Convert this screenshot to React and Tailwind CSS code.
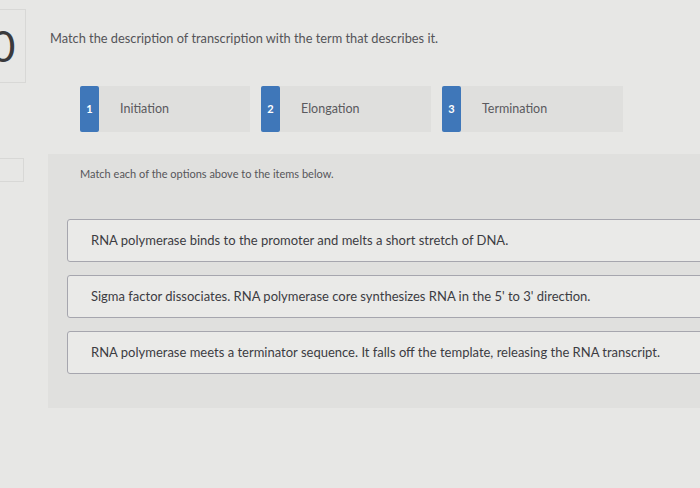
const options = [
    { n: 1, label: "Initiation", w: "w-[170px]" },
    { n: 2, label: "Elongation", w: "w-[170px]" },
    { n: 3, label: "Termination", w: "w-[181px]" },
];

const items = [
    "RNA polymerase binds to the promoter and melts a short stretch of DNA.",
    "Sigma factor dissociates. RNA polymerase core synthesizes RNA in the 5' to 3' direction.",
    "RNA polymerase meets a terminator sequence. It falls off the template, releasing the RNA transcript.",
];

const App = () => {
    return (
        <div
            className="w-[700px] h-[488px] bg-[#e7e7e5] flex overflow-hidden text-[#505054]"
            style={{ fontFamily: "Lato, 'Open Sans', sans-serif" }}
        >
            {/* side question list */}
            <div className="w-[28px] shrink-0 flex flex-col">
                <div className="mt-[9px] h-[74px] w-[26px] border border-l-0 border-[#d8d8d6] flex items-center justify-start overflow-hidden">
                    <span className="text-[42px] leading-none text-[#3a3a3c] -ml-[9px]">0</span>
                </div>
                <div className="mt-[75px] h-[24px] w-[24px] border border-l-0 border-[#d8d8d6]" />
            </div>

            <div className="flex-1 flex flex-col pl-[22px]">
                <p className="mt-[29px] text-[12.8px] leading-[18px] text-[#545458]">
                    Match the description of transcription with the term that describes it.
                </p>

                <div className="mt-[39px] ml-[30px] flex gap-[11px]">
                    {options.map((o) => (
                        <div key={o.n} className={`${o.w} h-[46px] flex`}>
                            <div className="w-[19px] h-full bg-[#3f77b9] rounded-[2px] flex items-center justify-center text-white text-[11px] font-bold">
                                {o.n}
                            </div>
                            <div className="flex-1 bg-[#dfdfdd] flex items-center pl-[21px] text-[12.5px] text-[#5a5a5e]">
                                {o.label}
                            </div>
                        </div>
                    ))}
                </div>

                <div className="mt-[22px] -ml-[2px] flex-1 mb-[80px] bg-[#e0e0de] pt-[13px] pl-[32px]">
                    <p className="text-[11px] leading-[14px] text-[#56565a]">
                        Match each of the options above to the items below.
                    </p>
                    <div className="mt-[38px] -ml-[13px] flex flex-col gap-[13px]">
                        {items.map((t) => (
                            <div
                                key={t}
                                className="w-[640px] h-[43px] bg-[#eaeae8] border border-[#a6a6ae] rounded-[3px] flex items-center pl-[23px] text-[13px] text-[#3c3c42]"
                            >
                                {t}
                            </div>
                        ))}
                    </div>
                </div>
            </div>
        </div>
    );
};

export default App;
